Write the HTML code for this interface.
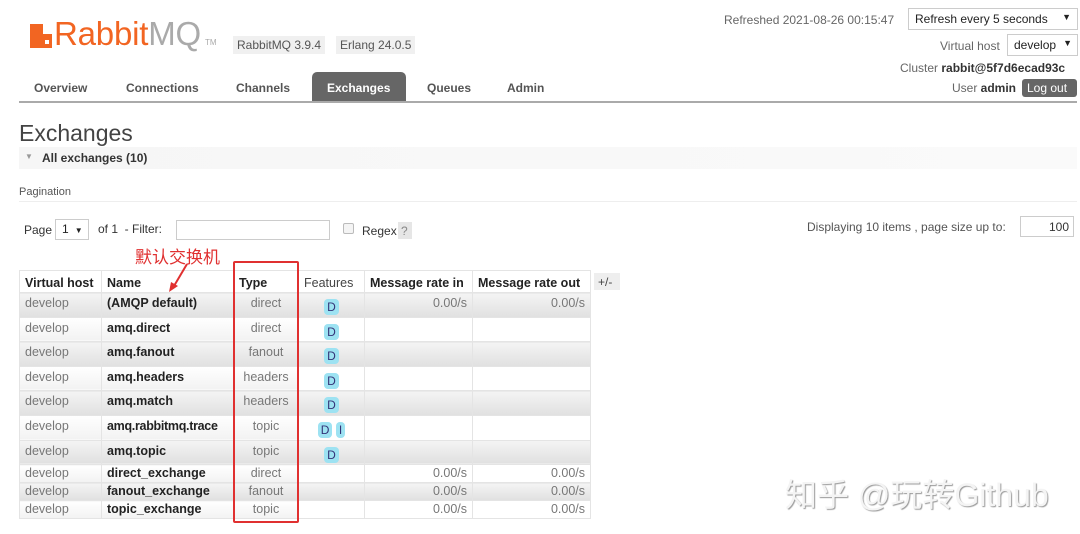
<!DOCTYPE html>
<html><head><meta charset="utf-8"><style>
*{margin:0;padding:0;box-sizing:border-box}
body{width:1080px;height:534px;background:#fff;position:relative;overflow:hidden;font-family:"Liberation Sans","DejaVu Sans",sans-serif;font-size:12px;color:#444}
.a{position:absolute;white-space:nowrap}
.b{font-weight:bold}
.tag{background:#f0f0f0;padding:2px 4px;color:#555;font-size:12px}
.tab{font-weight:bold;color:#555;font-size:12px}
table{position:absolute;left:19px;top:270px;border-collapse:collapse;font-size:12.5px;table-layout:fixed;width:571px}
td,th{border:1px solid #e4e4e4;padding:0 5px;height:24.6px;vertical-align:top;padding-top:3px;overflow:hidden;white-space:nowrap}
th{text-align:left;color:#222;background:#fff;height:22px;padding-top:5px}
tr.g td{background:linear-gradient(#f4f4f4,#e0e0e0)}
tr.w td{background:linear-gradient(#fff,#f2f2f2)}
tr.w td.e,tr.g td.e{background:#fff}
td.v{color:#777}
td.n{font-weight:bold;color:#222}
td.t{text-align:center;color:#777}
td.f{text-align:center}
td.r{text-align:right;color:#777}
.d{display:inline-block;background:#9de2f2;color:#337;border-radius:4px;padding:2px 3px;font-size:12px;margin-top:3px;line-height:12px}
tr.s td{height:18px;padding-top:1px}
</style></head><body>
<div class="a" style="left:30px;top:24px;width:8px;height:24px;background:#f26522"></div>
<div class="a" style="left:30px;top:34px;width:22px;height:14px;background:#f26522"></div>
<div class="a" style="left:38px;top:24px;width:5px;height:10px;background:#f26522"></div>
<div class="a" style="left:45px;top:40px;width:4px;height:4px;background:#fff"></div>
<div class="a" style="left:54px;top:15px;font-size:33px;color:#f26522;letter-spacing:-0.2px">Rabbit<span style="color:#aaa">MQ</span></div>
<div class="a" style="left:205px;top:38px;font-size:8px;color:#aaa">TM</div>
<div class="a tag" style="left:233px;top:36px">RabbitMQ 3.9.4</div>
<div class="a tag" style="left:336px;top:36px">Erlang 24.0.5</div>
<div class="a tab" style="left:34px;top:81px">Overview</div>
<div class="a tab" style="left:126px;top:81px">Connections</div>
<div class="a tab" style="left:236px;top:81px">Channels</div>
<div class="a" style="left:312px;top:72px;width:94px;height:30px;background:#666;border-radius:5px 5px 0 0"></div>
<div class="a tab" style="left:327px;top:81px;color:#fff">Exchanges</div>
<div class="a tab" style="left:427px;top:81px">Queues</div>
<div class="a tab" style="left:507px;top:81px">Admin</div>
<div class="a" style="left:19px;top:101px;width:1058px;height:2px;background:#aaa"></div>
<div class="a" style="left:724px;top:13px;color:#666">Refreshed 2021-08-26 00:15:47</div>
<div class="a" style="left:908px;top:8px;width:170px;height:22px;border:1px solid #ccc;padding:3px 6px;color:#222">Refresh every 5 seconds<span style="position:absolute;right:6px;font-size:9px">▼</span></div>
<div class="a" style="left:940px;top:39px;color:#666">Virtual host</div>
<div class="a" style="left:1007px;top:34px;width:71px;height:22px;border:1px solid #ccc;padding:3px 6px;color:#222">develop<span style="position:absolute;right:5px;font-size:9px">▼</span></div>
<div class="a" style="left:900px;top:61px;color:#666">Cluster <b style="color:#333">rabbit@5f7d6ecad93c</b></div>
<div class="a" style="left:952px;top:81px;color:#666">User <b style="color:#333">admin</b></div>
<div class="a" style="left:1022px;top:79px;width:55px;height:18px;background:#666;border-radius:3px;color:#fff;padding:2px 5px">Log out</div>
<div class="a" style="left:19px;top:120px;font-size:23px;color:#444">Exchanges</div>
<div class="a" style="left:19px;top:147px;width:1058px;height:22px;background:linear-gradient(90deg,#f6f6f6,#fafafa)"></div>
<div class="a" style="left:25px;top:152px;font-size:8px;color:#999">▼</div>
<div class="a b" style="left:42px;top:151px;color:#333">All exchanges (10)</div>
<div class="a" style="left:19px;top:186px;color:#555;font-size:11px">Pagination</div>
<div class="a" style="left:19px;top:201px;width:1058px;height:1px;background:#eee"></div>
<div class="a" style="left:24px;top:223px;color:#333">Page</div>
<div class="a" style="left:55px;top:219px;width:34px;height:21px;border:1px solid #ccc;padding:2px 6px;color:#222">1<span style="font-size:8px;margin-left:6px">▼</span></div>
<div class="a" style="left:98px;top:222px;color:#333">of 1 &nbsp;- Filter:</div>
<div class="a" style="left:176px;top:220px;width:154px;height:20px;border:1px solid #ccc"></div>
<div class="a" style="left:343px;top:223px;width:11px;height:11px;border:1px solid #bbb;border-radius:2px;background:#f4f4f4"></div>
<div class="a" style="left:362px;top:224px;color:#333">Regex</div>
<div class="a" style="left:398px;top:222px;width:14px;height:17px;background:#e6e6e6;color:#888;padding:2px 3px">?</div>
<div class="a" style="left:807px;top:220px;color:#555">Displaying 10 items , page size up to:</div>
<div class="a" style="left:1020px;top:216px;width:54px;height:21px;border:1px solid #ccc;padding:3px 4px;text-align:right;color:#333">100</div>
<table>
<colgroup><col style="width:82px"><col style="width:132px"><col style="width:65px"><col style="width:66px"><col style="width:108px"><col style="width:118px"></colgroup>
<tr><th>Virtual host</th><th>Name</th><th>Type</th><th style="font-weight:normal;color:#444">Features</th><th>Message rate in</th><th>Message rate out</th></tr>
<tr class="g"><td class="v">develop</td><td class="n">(AMQP default)</td><td class="t">direct</td><td class="f"><span class="d">D</span></td><td class="r">0.00/s</td><td class="r">0.00/s</td></tr>
<tr class="w"><td class="v">develop</td><td class="n">amq.direct</td><td class="t">direct</td><td class="f e"><span class="d">D</span></td><td class="e"></td><td class="e"></td></tr>
<tr class="g"><td class="v">develop</td><td class="n">amq.fanout</td><td class="t">fanout</td><td class="f"><span class="d">D</span></td><td></td><td></td></tr>
<tr class="w"><td class="v">develop</td><td class="n">amq.headers</td><td class="t">headers</td><td class="f e"><span class="d">D</span></td><td class="e"></td><td class="e"></td></tr>
<tr class="g"><td class="v">develop</td><td class="n">amq.match</td><td class="t">headers</td><td class="f"><span class="d">D</span></td><td></td><td></td></tr>
<tr class="w"><td class="v">develop</td><td class="n" style="letter-spacing:-0.3px">amq.rabbitmq.trace</td><td class="t">topic</td><td class="f e"><span class="d">D</span> <span class="d">I</span></td><td class="e"></td><td class="e"></td></tr>
<tr class="g"><td class="v">develop</td><td class="n">amq.topic</td><td class="t">topic</td><td class="f"><span class="d">D</span></td><td></td><td></td></tr>
<tr class="w s"><td class="v">develop</td><td class="n">direct_exchange</td><td class="t">direct</td><td class="f e"></td><td class="r e">0.00/s</td><td class="r e">0.00/s</td></tr>
<tr class="g s"><td class="v">develop</td><td class="n">fanout_exchange</td><td class="t">fanout</td><td class="f"></td><td class="r">0.00/s</td><td class="r">0.00/s</td></tr>
<tr class="w s"><td class="v">develop</td><td class="n">topic_exchange</td><td class="t">topic</td><td class="f e"></td><td class="r e">0.00/s</td><td class="r e">0.00/s</td></tr>
</table>
<div class="a" style="left:594px;top:273px;width:26px;height:17px;background:#eee;color:#444;padding:2px 4px">+/-</div>
<div class="a" style="left:233px;top:261px;width:66px;height:262px;border:2px solid #e03030;border-radius:2px"></div>
<div class="a" style="left:135px;top:243px;font-size:17px;color:#e03030;font-family:'Liberation Sans','Noto Sans CJK SC',sans-serif">默认交换机</div>
<svg class="a" style="left:165px;top:262px" width="30" height="32"><path d="M22 2 L9 24" stroke="#e03030" stroke-width="2"/><path d="M4 30 L6 20 L13 24 Z" fill="#e03030"/></svg>
<div class="a" style="left:785px;top:470px;font-size:32px;color:#f4f4f4;text-shadow:1px 1px 1px #999;font-family:'Liberation Sans','Noto Sans CJK SC',sans-serif">知乎 @玩转Github</div>
</body></html>
